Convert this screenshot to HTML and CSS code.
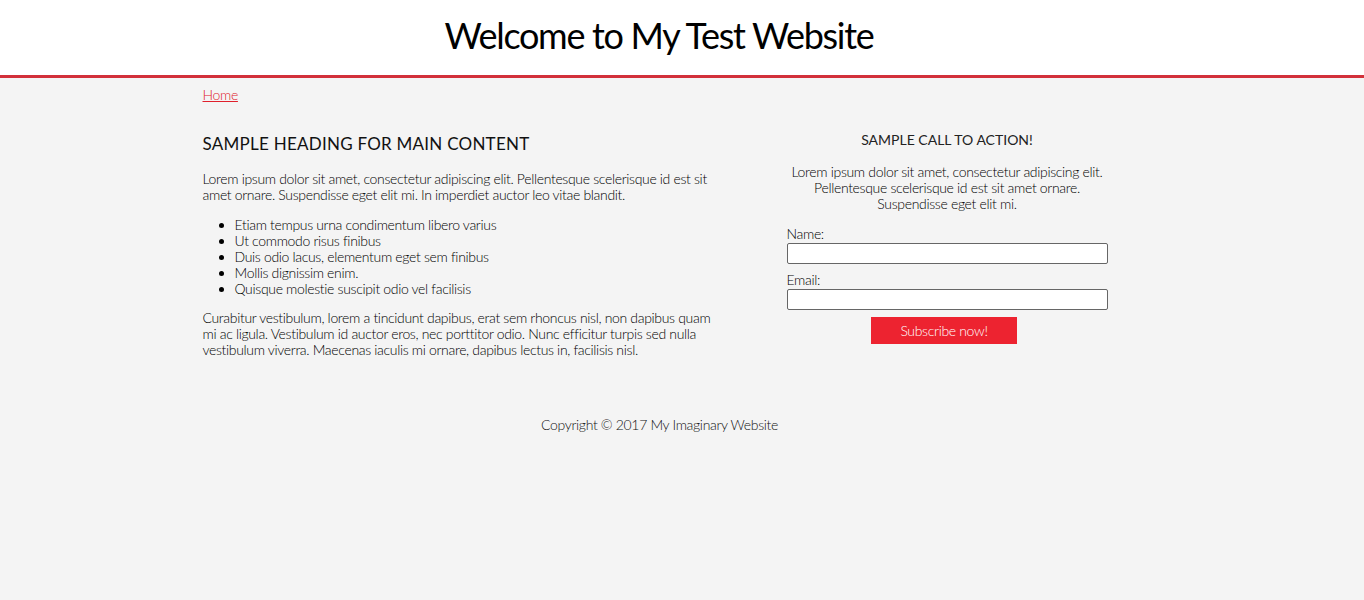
FILE: index.html
```html
<!DOCTYPE html>
<html lang="en">
<head>
<meta charset="utf-8">
<title>My Test Website</title>
<link rel="stylesheet" href="styles.css">
</head>
<body>
<header class="site-header">
  <h1 class="site-title">Welcome to My Test Website</h1>
</header>
<div class="container">
  <nav class="breadcrumb"><a href="#">Home</a></nav>
  <div class="columns">
    <main class="main">
      <h2 class="main-heading">Sample heading for main content</h2>
      <p>Lorem ipsum dolor sit amet, consectetur adipiscing elit. Pellentesque scelerisque id est sit amet ornare. Suspendisse eget elit mi. In imperdiet auctor leo vitae blandit.</p>
      <ul class="list">
        <li>Etiam tempus urna condimentum libero varius</li>
        <li>Ut commodo risus finibus</li>
        <li>Duis odio lacus, elementum eget sem finibus</li>
        <li>Mollis dignissim enim.</li>
        <li>Quisque molestie suscipit odio vel facilisis</li>
      </ul>
      <p>Curabitur vestibulum, lorem a tincidunt dapibus, erat sem rhoncus nisl, non dapibus quam mi ac ligula. Vestibulum id auctor eros, nec porttitor odio. Nunc efficitur turpis sed nulla vestibulum viverra. Maecenas iaculis mi ornare, dapibus lectus in, facilisis nisl.</p>
    </main>
    <aside class="cta">
      <h3 class="cta-heading">Sample call to action!</h3>
      <p class="cta-text">Lorem ipsum dolor sit amet, consectetur adipiscing elit. Pellentesque scelerisque id est sit amet ornare. Suspendisse eget elit mi.</p>
      <form class="form">
        <label class="label" for="name">Name:</label>
        <input class="input" id="name" type="text">
        <label class="label" for="email">Email:</label>
        <input class="input" id="email" type="email">
        <button class="button" type="button">Subscribe now!</button>
      </form>
    </aside>
  </div>
  <footer class="footer">Copyright © 2017 My Imaginary Website</footer>
</div>
</body>
</html>
```
FILE: styles.css
```css
html, body {
  margin: 0;
  padding: 0;
}
body {
  background: #f4f4f4;
  font-family: Lato, "Liberation Sans", sans-serif;
  font-weight: 300;
  font-size: 14px;
  line-height: 16px;
  letter-spacing: -0.33px;
  color: #000;
}
.site-header {
  background: #fff;
  border-bottom: 3px solid #d2303a;
  box-sizing: border-box;
  height: 78px;
  display: flex;
  align-items: center;
  justify-content: center;
  padding-bottom: 6px;
}
.site-title {
  margin: 0;
  font-weight: 400;
  font-size: 36px;
  line-height: 40px;
  letter-spacing: -1.3px;
  padding-right: 46px;
  color: #000;
}
.container {
  width: 960px;
  margin: 0 auto;
  padding-top: 9px;
  padding-left: 1px;
}
.breadcrumb a {
  color: #e0202c;
  text-decoration: underline;
}
.columns {
  display: grid;
  grid-template-columns: 528px 321px;
  column-gap: 56px;
  margin-top: 31px;
}
.main-heading {
  margin: 0 0 17px;
  font-weight: 400;
  font-size: 17px;
  line-height: 20px;
  letter-spacing: 0.25px;
  text-transform: uppercase;
  color: #111;
}
.main p {
  margin: 0 0 14px;
  padding-right: 12px;
}
.list {
  margin: 0 0 13px;
  padding-left: 32px;
}
.cta {
  text-align: center;
}
.cta-heading {
  margin: -2px 0 16px;
  font-weight: 400;
  font-size: 14px;
  line-height: 16px;
  letter-spacing: 0;
  text-transform: uppercase;
  color: #222;
}
.cta-text {
  margin: 0 0 14px;
}
.form {
  display: flex;
  flex-direction: column;
  align-items: stretch;
  text-align: left;
}
.label {
  line-height: 16px;
}
.input {
  box-sizing: border-box;
  height: 21px;
  margin: 1px 0 8px;
  border: 1px solid #666;
  border-radius: 2px;
  background: #fff;
}
.button {
  align-self: center;
  width: 146px;
  height: 27px;
  margin-top: -1px;
  border: none;
  background: #ed2330;
  color: #fff;
  font-family: Lato, "Liberation Sans", sans-serif;
  font-weight: 300;
  font-size: 14px;
  letter-spacing: -0.33px;
  margin-left: -6px;
}
.footer {
  text-align: center;
  margin-top: 45px;
  padding-right: 46px;
  color: #111;
}
```
